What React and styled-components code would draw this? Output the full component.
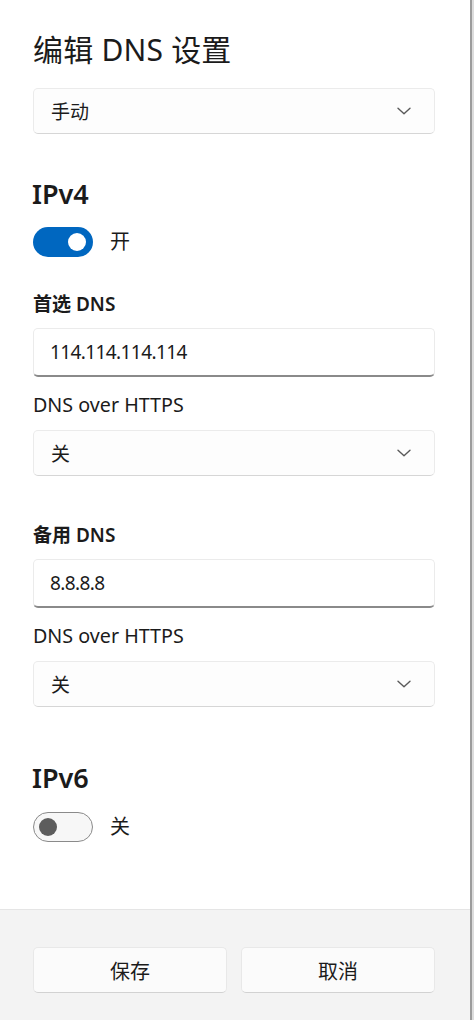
import React from 'react';
import styled, { createGlobalStyle } from 'styled-components';

const GlobalStyle = createGlobalStyle`
  html, body {
    margin: 0;
    padding: 0;
    background: #ffffff;
  }
  body {
    font-family: "Noto Sans", "Noto Sans CJK SC", sans-serif;
    color: #1b1b1b;
  }
`;

const Window = styled.div`
  display: flex;
  flex-direction: column;
  height: 1020px;
  width: 470px;
  border-right: 2px solid #9c9c9c;
  box-shadow: 2px 0 0 #dcdcdc;
  background: #ffffff;
  overflow: hidden;
`;

const Content = styled.div`
  flex: 1;
  display: flex;
  flex-direction: column;
  padding: 30px 35px 0 33px;
`;

const Title = styled.h1`
  margin: 0;
  font-size: 30px;
  font-weight: 400;
  line-height: 40px;
  letter-spacing: 0.2px;
`;

const SectionHeading = styled.h2`
  margin: ${(p) => p.$gap}px 0 0 -1px;
  font-size: 27px;
  font-weight: 600;
  line-height: 36px;
`;

const FieldLabel = styled.div`
  margin-top: ${(p) => p.$gap}px;
  font-size: ${(p) => (p.$strong ? 19 : 19.7)}px;
  font-weight: ${(p) => (p.$strong ? 600 : 400)};
  line-height: 28px;
`;

const Select = styled.div`
  margin-top: ${(p) => p.$gap}px;
  height: 46px;
  box-sizing: border-box;
  display: flex;
  align-items: center;
  justify-content: space-between;
  padding: 0 23px 0 17px;
  background: #fdfdfd;
  border: 1px solid #ebebeb;
  border-bottom-color: #d6d6d6;
  border-radius: 5px;
  font-size: 19px;
`;

const TextBox = styled.div`
  margin-top: ${(p) => p.$gap}px;
  height: 49px;
  box-sizing: border-box;
  display: flex;
  align-items: center;
  padding: 0 16px;
  background: #ffffff;
  border: 1px solid #ebebeb;
  border-bottom: 2px solid #8a8a8a;
  border-radius: 5px;
  font-size: 19px;
  letter-spacing: -0.6px;
`;

const ToggleRow = styled.div`
  margin-top: ${(p) => p.$gap}px;
  display: flex;
  align-items: center;
  gap: 17px;
  font-size: 20px;
  line-height: 30px;
`;

const Track = styled.div`
  width: 60px;
  height: 30px;
  box-sizing: border-box;
  border-radius: 15px;
  display: flex;
  align-items: center;
  padding: 0 ${(p) => (p.$on ? 7 : 5)}px;
  justify-content: ${(p) => (p.$on ? 'flex-end' : 'flex-start')};
  background: ${(p) => (p.$on ? '#0067c0' : '#f7f7f7')};
  border: ${(p) => (p.$on ? 'none' : '1.5px solid #8a8a8a')};
`;

const Knob = styled.div`
  width: 18px;
  height: 18px;
  border-radius: 50%;
  background: ${(p) => (p.$on ? '#ffffff' : '#5d5d5d')};
`;

const Footer = styled.div`
  height: 111px;
  box-sizing: border-box;
  background: #f3f3f3;
  border-top: 1px solid #e5e5e5;
  padding: 37px 35px 0 33px;
  display: grid;
  grid-template-columns: 1fr 1fr;
  gap: 14px;
  align-items: start;
`;

const Button = styled.button`
  height: 46px;
  background: #fbfbfb;
  border: 1px solid #e8e8e8;
  border-bottom-color: #d2d2d2;
  border-radius: 5px;
  font-family: "Noto Sans", "Noto Sans CJK SC", sans-serif;
  font-size: 20px;
  color: #1b1b1b;
`;

const Chevron = () => (
  <svg width="14" height="8" viewBox="0 0 14 8" fill="none">
    <path d="M1 1.2 L7 6.8 L13 1.2" stroke="#5a5a5a" strokeWidth="1.4" strokeLinecap="round" strokeLinejoin="round" />
  </svg>
);

const Dropdown = ({ value, gap }) => (
  <Select $gap={gap}>
    <span>{value}</span>
    <Chevron />
  </Select>
);

const Toggle = ({ on, label, gap }) => (
  <ToggleRow $gap={gap}>
    <Track $on={on}>
      <Knob $on={on} />
    </Track>
    <span>{label}</span>
  </ToggleRow>
);

const DnsBlock = ({ title, address, gap }) => (
  <>
    <FieldLabel $strong $gap={gap}>{title}</FieldLabel>
    <TextBox $gap={10}>{address}</TextBox>
    <FieldLabel $gap={14}>DNS over HTTPS</FieldLabel>
    <Dropdown value="关" gap={11} />
  </>
);

export default function App() {
  return (
    <>
      <GlobalStyle />
      <Window>
        <Content>
          <Title>编辑 DNS 设置</Title>
          <Dropdown value="手动" gap={18} />

          <SectionHeading $gap={42}>IPv4</SectionHeading>
          <Toggle on label="开" gap={15} />

          <DnsBlock title="首选 DNS" address="114.114.114.114" gap={33} />
          <DnsBlock title="备用 DNS" address="8.8.8.8" gap={45} />

          <SectionHeading $gap={53}>IPv6</SectionHeading>
          <Toggle on={false} label="关" gap={16} />
        </Content>
        <Footer>
          <Button>保存</Button>
          <Button>取消</Button>
        </Footer>
      </Window>
    </>
  );
}
